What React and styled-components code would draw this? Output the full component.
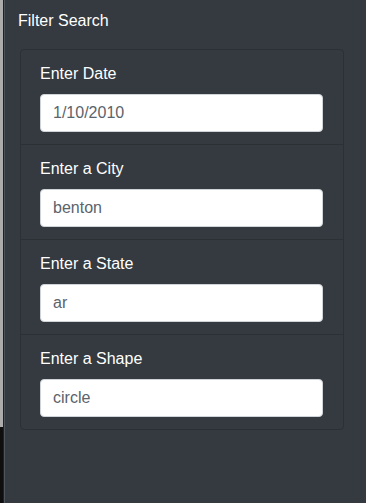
import React from "react";
import styled, { createGlobalStyle } from "styled-components";

const GlobalStyle = createGlobalStyle`
  html, body, #root { margin: 0; padding: 0; height: 100%; }
  body {
    background: #343a40;
    font-family: "Liberation Sans", Arial, Helvetica, sans-serif;
    -webkit-font-smoothing: antialiased;
  }
  * { box-sizing: border-box; }
`;

const Page = styled.div`
  display: flex;
  height: 100%;
  min-height: 503px;
`;

const Strip = styled.div`
  display: flex;
  flex-direction: column;
  flex: 0 0 5px;
  width: 5px;
  border-right: 1px solid #4e545b;
`;

const StripPart = styled.div`
  background: ${(p) => p.$color};
  border-right: 1px solid #1d2024;
  height: ${(p) => p.$height || "auto"};
  flex: ${(p) => (p.$grow ? 1 : "none")};
`;

const Panel = styled.aside`
  flex: 1;
  background: #343a40;
  padding: 9px 23px 0 13px;
`;

const Title = styled.h2`
  margin: 0 0 16px 0;
  font-size: 16px;
  line-height: 24px;
  font-weight: 400;
  color: #ffffff;
`;

const Card = styled.ul`
  list-style: none;
  margin: 0 0 0 2px;
  padding: 0;
  width: 324px;
  border: 1px solid #2b3035;
  border-radius: 4px;
`;

const Item = styled.li`
  padding: 12px 20px 12px 19px;
  & + & {
    border-top: 1px solid #2b3035;
  }
`;

const Label = styled.label`
  display: block;
  margin-bottom: 8px;
  font-size: 16px;
  line-height: 24px;
  color: #ffffff;
`;

const Input = styled.input`
  display: block;
  width: 100%;
  height: 38px;
  padding: 6px 12px;
  font-family: inherit;
  font-size: 16px;
  line-height: 24px;
  color: #5b636b;
  background: #ffffff;
  border: 1px solid #ced4da;
  border-radius: 4px;
  outline: none;
`;

const fields = [
  { id: "datetime", label: "Enter Date", value: "1/10/2010" },
  { id: "city", label: "Enter a City", value: "benton" },
  { id: "state", label: "Enter a State", value: "ar" },
  { id: "shape", label: "Enter a Shape", value: "circle" },
];

export default function App() {
  return (
    <>
      <GlobalStyle />
      <Page>
        <Strip>
          <StripPart $color="#acacac" $height="427px" />
          <StripPart $color="#0e0e0e" $grow />
        </Strip>
        <Panel>
          <Title>Filter Search</Title>
          <Card>
            {fields.map((f) => (
              <Item key={f.id}>
                <Label htmlFor={f.id}>{f.label}</Label>
                <Input id={f.id} type="text" defaultValue={f.value} />
              </Item>
            ))}
          </Card>
        </Panel>
      </Page>
    </>
  );
}
